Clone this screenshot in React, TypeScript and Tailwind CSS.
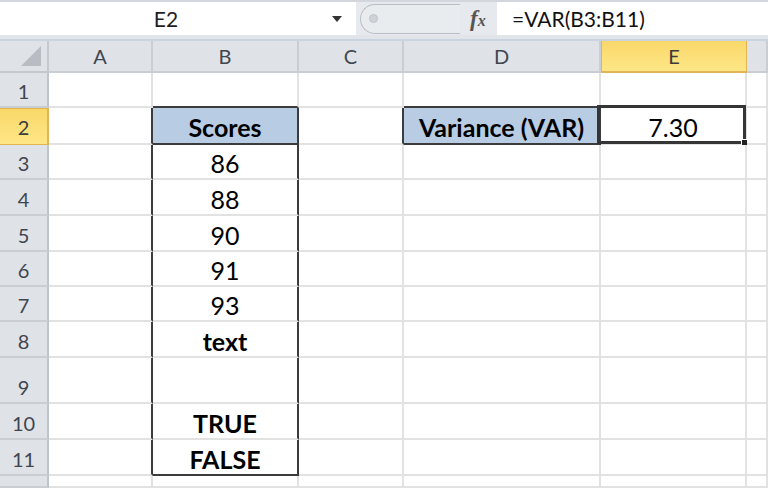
import React from "react"

const colWidths = [49, 104, 146, 105, 197, 146, 21]
const colNames = ["A", "B", "C", "D", "E", ""]
const rowHeights = [35, 37, 35, 36, 36, 35, 35, 36, 46, 36, 36, 12]

type Cell = { text: string; bold?: boolean; fill?: boolean }

const data: Record<number, Record<number, Cell>> = {
  2: { 2: { text: "Scores", bold: true, fill: true }, 4: { text: "Variance (VAR)", bold: true, fill: true }, 5: { text: "7.30" } },
  3: { 2: { text: "86" } },
  4: { 2: { text: "88" } },
  5: { 2: { text: "90" } },
  6: { 2: { text: "91" } },
  7: { 2: { text: "93" } },
  8: { 2: { text: "text", bold: true } },
  10: { 2: { text: "TRUE", bold: true } },
  11: { 2: { text: "FALSE", bold: true } },
}

// which cells get the dark table border on their right / bottom edge
const rightDark = (r: number, c: number) =>
  (r >= 2 && r <= 11 && (c === 1 || c === 2)) || (r === 2 && (c === 3 || c === 4))
const bottomDark = (r: number, c: number) =>
  (c === 2 && (r === 1 || r === 2 || r === 11)) || (c === 4 && (r === 1 || r === 2))

const FormulaBar = () => (
  <div className="flex h-[35px] bg-[#e6e9ed] border-t-2 border-[#d3d7dd]">
    {/* Name box */}
    <div className="relative flex w-[356px] items-center bg-white">
      <div className="w-[332px] text-center text-[21px] text-[#1f1f1f]">E2</div>
      <div className="h-0 w-0 border-x-[5px] border-t-[6px] border-x-transparent border-t-[#333]" />
    </div>
    {/* splitter pill + fx */}
    <div className="flex w-[141px] items-center">
      <div className="ml-[4px] flex h-[30px] w-[100px] items-center rounded-l-full border border-r-0 border-[#b9bec5] bg-[#e9ecef] pl-[8px]">
        <div className="h-[9px] w-[9px] rounded-full bg-[#cfd3d8] border border-[#bfc4ca]" />
      </div>
      <div className="ml-[10px] font-['Liberation_Serif'] text-[23px] font-bold italic text-[#555] leading-none">
        f<span className="text-[16px]">x</span>
      </div>
    </div>
    <div className="flex flex-1 items-center bg-white pl-[15px] text-[21px] text-[#111]">=VAR(B3:B11)</div>
  </div>
)

export default function App() {
  return (
    <div className="h-[488px] w-[768px] overflow-hidden bg-white font-['Lato',sans-serif]">
      <FormulaBar />
      <div className="h-[6px] bg-[#e1e4e9] border-b-2 border-[#c9d3e2]" />

      <div
        className="grid"
        style={{
          gridTemplateColumns: colWidths.map((w) => `${w}px`).join(" "),
          gridTemplateRows: `32px ${rowHeights.map((h) => `${h}px`).join(" ")}`,
        }}
      >
        {/* corner */}
        <div className="relative border-r-2 border-b-2 border-[#c4c9d0] bg-[#dfe3e8]">
          <svg className="absolute bottom-[5px] right-[6px]" width="20" height="20" viewBox="0 0 20 20">
            <polygon points="20,0 20,20 0,20" fill="#b9bdc3" />
          </svg>
        </div>
        {colNames.map((n, i) =>
          n === "E" ? (
            <div
              key={i}
              className="flex items-center justify-center border-x border-b-2 border-[#e2b453] bg-gradient-to-b from-[#f9d86a] to-[#fee686] text-[20px] text-[#3b3b3b]"
            >
              {n}
            </div>
          ) : (
            <div
              key={i}
              className="flex items-center justify-center border-r-2 border-b-2 border-[#c9ced5] bg-[#dfe3e8] text-[20px] text-[#3f4650]"
            >
              {n}
            </div>
          )
        )}

        {rowHeights.map((_, ri) => {
          const r = ri + 1
          return (
            <React.Fragment key={r}>
              {r === 2 ? (
                <div className="flex items-center justify-center border-y border-r-2 border-[#e2b453] bg-gradient-to-b from-[#f9d86a] to-[#fee686] text-[20px] text-[#3b3b3b]">
                  {r}
                </div>
              ) : (
                <div
                  className={`flex items-center justify-center border-r-2 border-b-2 border-r-[#bfc4cb] border-b-[#c9ced5] bg-[#dfe3e8] text-[20px] text-[#3f4650] ${
                    r === 9 ? "pt-[14px]" : "pt-[3px]"
                  }`}
                >
                  {r < 12 ? r : ""}
                </div>
              )}
              {[1, 2, 3, 4, 5, 6].map((c) => {
                const cell = data[r]?.[c]
                const rd = rightDark(r, c)
                const bd = bottomDark(r, c)
                return (
                  <div
                    key={c}
                    className={`relative flex items-center justify-center border-r-2 border-b-2 pt-[5px] text-[25px] text-black ${
                      rd ? "border-r-[#3c3c3c]" : "border-r-[#e2e2e2]"
                    } ${bd ? "border-b-[#3c3c3c]" : "border-b-[#e2e2e2]"} ${cell?.fill ? "bg-[#b8cce4]" : "bg-white"} ${
                      cell?.bold ? "font-bold" : ""
                    }`}
                  >
                    {cell?.text}
                    {r === 2 && c === 5 && (
                      <div className="absolute -left-[4px] -top-[3px] -right-[1px] -bottom-[1px] border-[3px] border-[#353535]">
                        <div className="absolute -bottom-[6px] -right-[6px] h-[8px] w-[8px] border border-white bg-[#222]" />
                      </div>
                    )}
                  </div>
                )
              })}
            </React.Fragment>
          )
        })}
      </div>
    </div>
  )
}
